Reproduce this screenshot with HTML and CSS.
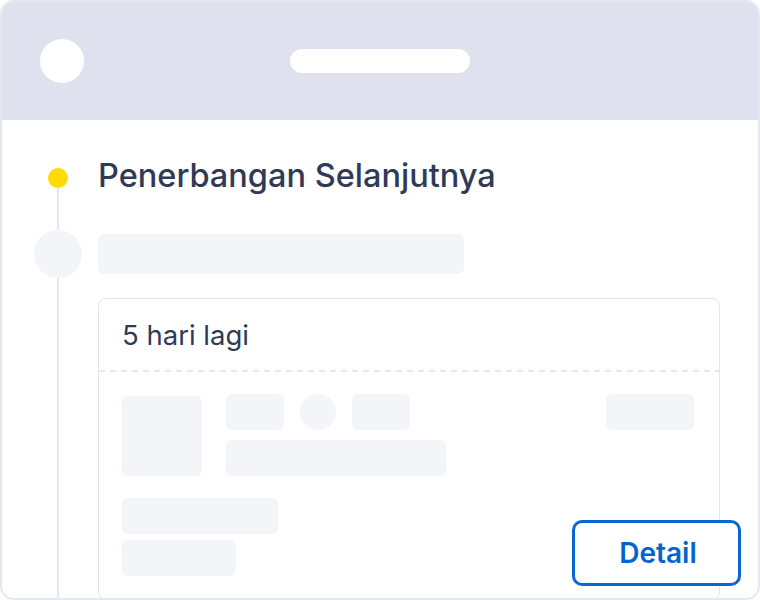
FILE: index.html
```html
<!DOCTYPE html>
<html>
<head>
<meta charset="utf-8">
<link rel="stylesheet" href="styles.css">
</head>
<body>
<div class="frame">
  <div class="header">
    <div class="avatar"></div>
    <div class="pill"></div>
    <div></div>
  </div>
  <div class="main">
    <div class="timeline">
      <div class="dot"></div>
      <div class="connector short"></div>
      <div class="node"></div>
      <div class="connector grow"></div>
    </div>
    <div class="content">
      <h1 class="title">Penerbangan Selanjutnya</h1>
      <div class="sk sk-sub"></div>
      <div class="card">
        <div class="card-head">5 hari lagi</div>
        <div class="dash"></div>
        <div class="card-body">
          <div class="row">
            <div class="sk sk-thumb"></div>
            <div class="group">
              <div class="line1">
                <div class="sk sk-small"></div>
                <div class="sk sk-circle"></div>
                <div class="sk sk-small"></div>
              </div>
              <div class="sk sk-wide"></div>
            </div>
            <div class="sk sk-price"></div>
          </div>
          <div class="sk sk-b1"></div>
          <div class="sk sk-b2"></div>
        </div>
      </div>
    </div>
  </div>
  <button class="detail">Detail</button>
</div>
</body>
</html>
```
FILE: styles.css
```css
* { box-sizing: border-box; }
html, body { margin: 0; padding: 0; background: #ffffff; }
body { font-family: Inter, "Noto Sans", sans-serif; color: #2f3a56; }

.frame {
  position: relative;
  width: 760px;
  height: 600px;
  border: 2px solid #e6e8f0;
  border-radius: 14px;
  overflow: hidden;
  background: #fff;
}

.header {
  height: 118px;
  background: #dfe2ee;
  display: grid;
  grid-template-columns: 1fr auto 1fr;
  align-items: center;
  padding: 0 38px;
}
.avatar { width: 44px; height: 44px; border-radius: 50%; background: #fff; }
.pill { width: 180px; height: 24px; border-radius: 12px; background: #fff; }

.main {
  display: flex;
  gap: 16px;
  padding-left: 32px;
  height: 480px;
}
.timeline {
  width: 48px;
  display: flex;
  flex-direction: column;
  align-items: center;
  padding-top: 48px;
}
.dot { width: 20px; height: 20px; border-radius: 50%; background: #ffdc00; flex: none; }
.connector { width: 2px; background: #e6e8f0; flex: none; margin-left: -1px; }
.connector.short { height: 42px; }
.connector.grow { flex: 1; }
.node { width: 48px; height: 48px; border-radius: 50%; background: #f4f5f9; flex: none; }

.content { display: flex; flex-direction: column; padding-top: 36px; }
.title {
  margin: 0;
  font-size: 32.5px;
  line-height: 40px;
  font-weight: 500;
  color: #2f3a56;
  white-space: nowrap;
}

.sk { background: #f4f5f9; border-radius: 6px; flex: none; }
.sk-sub { width: 366px; height: 40px; margin-top: 38px; }

.card {
  margin-top: 24px;
  width: 622px;
  height: 400px;
  border: 1px solid #e1e4ee;
  border-radius: 8px;
}
.card-head {
  height: 71px;
  display: flex;
  align-items: center;
  padding-left: 23px;
  font-size: 27.5px;
  font-weight: 400;
  color: #2f3a56;
}
.dash {
  height: 2px;
  background: repeating-linear-gradient(90deg, #e6e8f0 0 6px, transparent 6px 11px);
}
.card-body {
  display: flex;
  flex-direction: column;
  padding: 22px 25px 0 23px;
}
.row { display: flex; align-items: flex-start; }
.sk-thumb { width: 80px; height: 80px; margin-top: 2px; }
.group { display: flex; flex-direction: column; gap: 10px; margin-left: 24px; }
.line1 { display: flex; gap: 16px; }
.sk-small { width: 58px; height: 36px; }
.sk-circle { width: 36px; height: 36px; border-radius: 50%; }
.sk-wide { width: 220px; height: 36px; }
.sk-price { width: 88px; height: 36px; margin-left: auto; }
.sk-b1 { width: 156px; height: 36px; margin-top: 22px; }
.sk-b2 { width: 114px; height: 36px; margin-top: 6px; }

.detail {
  position: absolute;
  left: 570px;
  top: 518px;
  width: 169px;
  height: 66px;
  border: 3px solid #0a66d4;
  border-radius: 10px;
  background: #fff;
  color: #0264d0;
  font-family: Inter, "Noto Sans", sans-serif;
  font-size: 28px;
  font-weight: 600;
  padding: 0 0 0 3px;
}
```
